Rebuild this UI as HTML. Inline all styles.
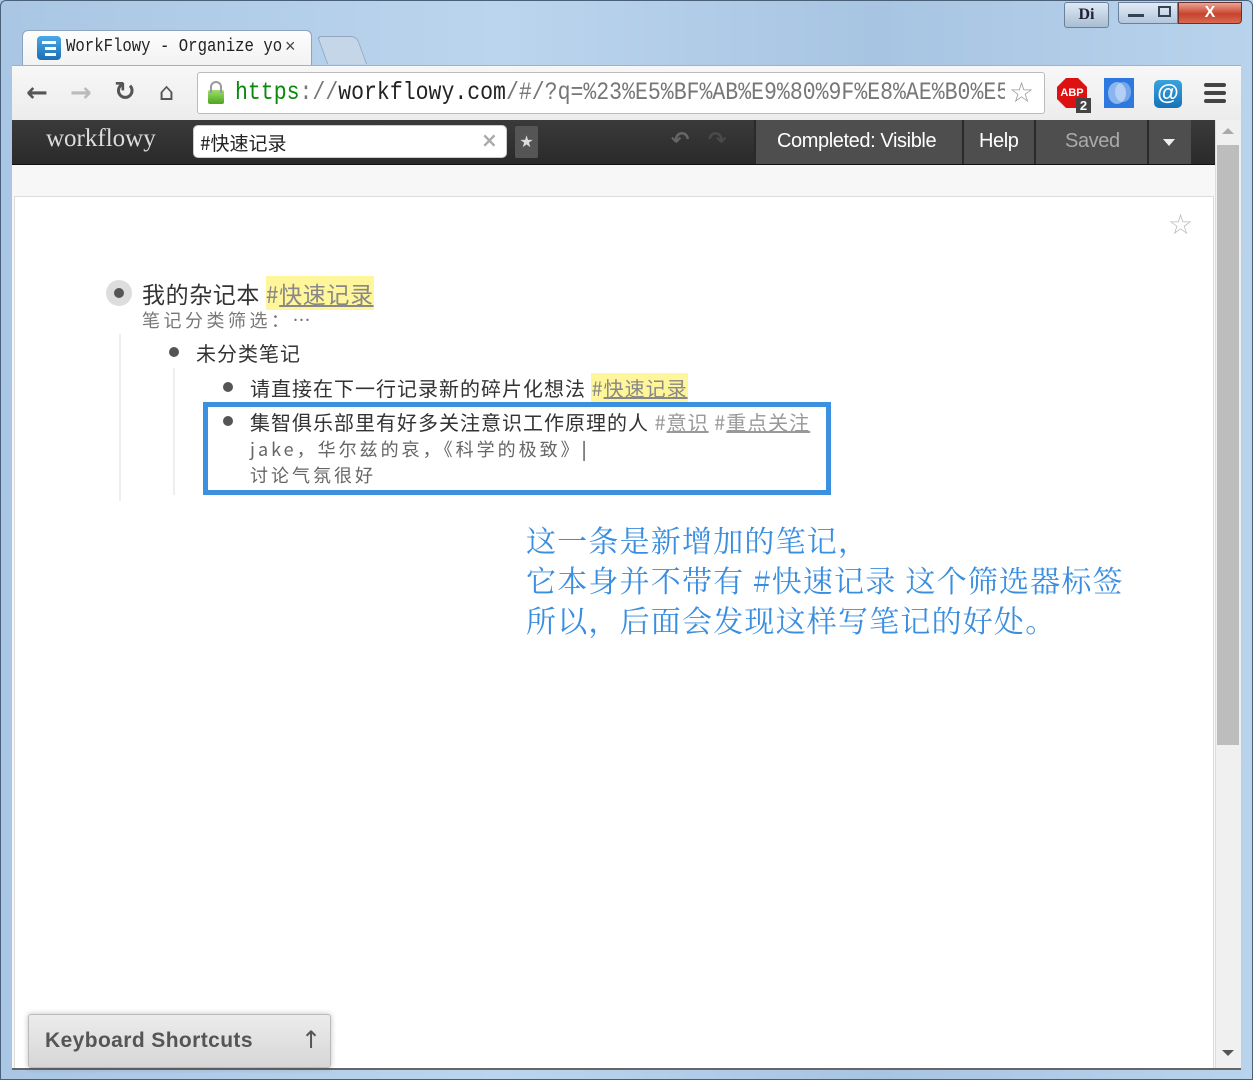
<!DOCTYPE html>
<html><head><meta charset="utf-8"><style>
*{margin:0;padding:0;box-sizing:border-box}
body{width:1253px;height:1080px;overflow:hidden;position:relative;background:linear-gradient(90deg,#a9c6e4,#bcd5ee 40%,#a7c4e2 70%,#b9d3ec);font-family:"Liberation Sans","Noto Sans CJK SC",sans-serif}
.abs{position:absolute}
.mono{font-family:"Liberation Mono","Noto Sans CJK SC",monospace}
.cjk{font-family:"Noto Sans CJK SC","Liberation Sans",sans-serif}
</style></head><body>
<div class="abs" style="left:0;top:0;width:1253px;height:1080px;border:1px solid #4a5f78;border-radius:6px 6px 0 0"></div>
<div class="abs" style="left:1064px;top:2px;width:45px;height:26px;border:1px solid #6b819b;border-radius:3px;background:linear-gradient(#dfe9f4,#a9bdd3);font:bold 16px 'Liberation Serif',serif;color:#223;text-align:center;line-height:24px">Di</div>
<div class="abs" style="left:1118px;top:2px;width:60px;height:22px;border:1px solid #6b819b;border-radius:0 0 0 4px;background:linear-gradient(#e2ebf5,#b3c6dc)"></div>
<div class="abs" style="left:1128px;top:14px;width:16px;height:3px;background:#345"></div>
<div class="abs" style="left:1158px;top:6px;width:13px;height:11px;border:2px solid #345"></div>
<div class="abs" style="left:1178px;top:2px;width:64px;height:22px;border:1px solid #6b3030;border-radius:0 0 4px 0;background:linear-gradient(#e9a594,#c7432e 55%,#d86a50);color:#fff;font:bold 16px 'Liberation Sans';text-align:center;line-height:20px">X</div>
<div class="abs" style="left:322px;top:36px;width:40px;height:28px;background:#c5d6e9;border:1px solid #8fa7c3;border-bottom:none;border-radius:4px 6px 0 0;transform:skewX(20deg)"></div>
<div class="abs" style="left:22px;top:30px;width:290px;height:36px;background:linear-gradient(#fdfdfd,#f2f2f2);border:1px solid #8ea3bd;border-bottom:none;border-radius:6px 6px 0 0"></div>
<div class="abs" style="left:37px;top:36px;width:24px;height:24px;border-radius:4px;background:linear-gradient(#4aa8e8,#1c6eb5)"></div>
<div class="abs" style="left:42px;top:41px;width:14px;height:3px;background:#fff"></div>
<div class="abs" style="left:45px;top:47px;width:11px;height:3px;background:#fff"></div>
<div class="abs" style="left:45px;top:53px;width:11px;height:3px;background:#fff"></div>
<div class="abs mono" style="left:66px;top:37px;font-size:18px;color:#222;white-space:nowrap;transform:scaleX(.87);transform-origin:left">WorkFlowy - Organize yo</div>
<div class="abs" style="left:285px;top:36px;font-size:18px;color:#444">×</div>
<div class="abs" style="left:12px;top:65px;width:1229px;height:56px;background:linear-gradient(#f7f7f7,#ececec);border-top:1px solid #9fb2c8"></div>
<div class="abs" style="left:26px;top:78px;font:bold 26px 'DejaVu Sans';color:#555">←</div>
<div class="abs" style="left:70px;top:78px;font:bold 26px 'DejaVu Sans';color:#bbb">→</div>
<div class="abs" style="left:114px;top:77px;font:bold 26px 'DejaVu Sans';color:#555">↻</div>
<div class="abs" style="left:159px;top:78px;font:24px 'DejaVu Sans';color:#555">⌂</div>
<div class="abs" style="left:197px;top:72px;width:848px;height:42px;background:#fff;border:1px solid #bbb;border-radius:3px"></div>
<div class="abs" style="left:208px;top:90px;width:16px;height:14px;background:linear-gradient(#9de06a,#4ea41f);border-radius:2px"></div>
<div class="abs" style="left:210px;top:81px;width:12px;height:12px;border:2px solid #999;border-bottom:none;border-radius:6px 6px 0 0"></div>
<div class="abs mono" style="left:235px;top:78px;font-size:25px;white-space:nowrap;overflow:hidden;transform:scaleX(.86);transform-origin:left;width:900px"><span style="color:#0a8a0a">https</span><span style="color:#777">://</span><span style="color:#222">workflowy.com</span><span style="color:#777">/#/?q=%23%E5%BF%AB%E9%80%9F%E8%AE%B0%E5%BD%9</span></div>
<div class="abs" style="left:1005px;top:74px;width:38px;height:38px;background:#fff"></div>
<div class="abs" style="left:1009px;top:76px;font:28px 'DejaVu Sans';color:#999">☆</div>
<div class="abs" style="left:1057px;top:78px;width:30px;height:30px;background:#d11;clip-path:polygon(30% 0,70% 0,100% 30%,100% 70%,70% 100%,30% 100%,0 70%,0 30%);color:#fff;font:bold 11px 'Liberation Sans';text-align:center;line-height:30px">ABP</div>
<div class="abs" style="left:1076px;top:98px;width:15px;height:15px;background:#444;color:#fff;font:bold 13px 'Liberation Sans';text-align:center;line-height:15px">2</div>
<div class="abs" style="left:1104px;top:78px;width:30px;height:30px;background:#2d79e0"></div>
<div class="abs" style="left:1108px;top:82px;width:18px;height:22px;border-radius:50%;background:rgba(255,255,255,.45)"></div>
<div class="abs" style="left:1115px;top:82px;width:16px;height:20px;border-radius:50%;background:rgba(255,255,255,.35)"></div>
<div class="abs" style="left:1154px;top:80px;width:28px;height:28px;border-radius:5px;background:linear-gradient(#39a3e0,#1672b8);color:#fff;font:bold 22px 'Liberation Sans';text-align:center;line-height:26px">@</div>
<div class="abs" style="left:1204px;top:83px;width:22px;height:4px;background:#444;border-radius:2px;box-shadow:0 8px 0 #444,0 16px 0 #444"></div>
<div class="abs" style="left:12px;top:120px;width:1203px;height:45px;background:linear-gradient(#3a3a3a,#2a2a2a);border-bottom:1px solid #111"></div>
<div class="abs" style="left:46px;top:125px;font:25px 'Liberation Serif',serif;color:#ddd">workflowy</div>
<div class="abs" style="left:193px;top:125px;width:314px;height:33px;background:#fff;border:1px solid #ccc;border-radius:5px"></div>
<div class="abs cjk" style="left:200px;top:129px;font-size:19px;color:#222">#快速记录</div>
<div class="abs" style="left:481px;top:128px;font:bold 20px 'DejaVu Sans';color:#aaa">×</div>
<div class="abs" style="left:515px;top:126px;width:23px;height:32px;background:#555;border-radius:2px;color:#ddd;font:16px 'DejaVu Sans';text-align:center;line-height:32px">★</div>
<div class="abs" style="left:671px;top:128px;font:bold 22px 'DejaVu Sans';color:#666">↶</div>
<div class="abs" style="left:708px;top:128px;font:bold 22px 'DejaVu Sans';color:#4a4a4a">↷</div>
<div class="abs" style="left:755px;top:120px;width:436px;height:44px;background:#4e4e4e"></div>
<div class="abs" style="left:962px;top:120px;width:2px;height:44px;background:#2a2a2a"></div>
<div class="abs" style="left:1034px;top:120px;width:2px;height:44px;background:#2a2a2a"></div>
<div class="abs" style="left:1147px;top:120px;width:2px;height:44px;background:#2a2a2a"></div>
<div class="abs" style="left:754px;top:120px;width:2px;height:44px;background:#2a2a2a"></div>
<div class="abs" style="left:777px;top:130px;font-size:20px;color:#fff;letter-spacing:-.4px">Completed: Visible</div>
<div class="abs" style="left:979px;top:130px;font-size:20px;color:#fff;letter-spacing:-.4px">Help</div>
<div class="abs" style="left:1065px;top:130px;font-size:20px;color:#aaa;letter-spacing:-.4px">Saved</div>
<div class="abs" style="left:1163px;top:139px;width:0;height:0;border:6px solid transparent;border-top:7px solid #eee;border-bottom:none"></div>
<div class="abs" style="left:12px;top:165px;width:1204px;height:904px;background:#f7f7f7"></div>
<div class="abs" style="left:14px;top:196px;width:1200px;height:873px;background:#fff;border:1px solid #ddd;border-bottom:none"></div>
<div class="abs" style="left:1168px;top:208px;font:28px 'DejaVu Sans';color:#bbb">☆</div>
<div class="abs" style="left:1215px;top:120px;width:26px;height:949px;background:#f0f0f0;border-left:1px solid #ddd"></div>
<div class="abs" style="left:1217px;top:145px;width:22px;height:600px;background:#bdbdbd"></div>
<div class="abs" style="left:1222px;top:128px;border:6px solid transparent;border-bottom:6px solid #aaa;border-top:none"></div>
<div class="abs" style="left:1222px;top:1050px;border:6px solid transparent;border-top:6px solid #555;border-bottom:none"></div>
<div class="abs" style="left:12px;top:1068px;width:1229px;height:2px;background:#666"></div>
<div class="abs" style="left:106px;top:280px;width:26px;height:26px;border-radius:50%;background:#ddd"></div>
<div class="abs" style="left:114px;top:288px;width:10px;height:10px;border-radius:50%;background:#555"></div>
<div class="abs cjk" style="left:142px;top:276px;font-size:23px;letter-spacing:.6px;color:#333;white-space:nowrap">我的杂记本 <span style="background:#fff59a;color:#888"><span>#</span><u>快速记录</u></span></div>
<div class="abs cjk" style="left:142px;top:307px;font-size:18px;color:#777;letter-spacing:3.5px;white-space:nowrap">笔记分类筛选：…</div>
<div class="abs" style="left:119px;top:334px;width:2px;height:167px;background:#eee"></div>
<div class="abs" style="left:169px;top:347px;width:10px;height:10px;border-radius:50%;background:#555"></div>
<div class="abs cjk" style="left:196px;top:338px;font-size:20px;letter-spacing:1px;color:#333">未分类笔记</div>
<div class="abs" style="left:173px;top:368px;width:2px;height:127px;background:#eee"></div>
<div class="abs" style="left:223px;top:382px;width:10px;height:10px;border-radius:50%;background:#555"></div>
<div class="abs cjk" style="left:250px;top:373px;font-size:20px;letter-spacing:1px;color:#333;white-space:nowrap">请直接在下一行记录新的碎片化想法 <span style="background:#fff59a;color:#888">#<u>快速记录</u></span></div>
<div class="abs" style="left:203px;top:402px;width:628px;height:93px;border:5px solid #3b91e0"></div>
<div class="abs" style="left:223px;top:416px;width:10px;height:10px;border-radius:50%;background:#555"></div>
<div class="abs cjk" style="left:250px;top:407px;font-size:20px;letter-spacing:1px;color:#333;white-space:nowrap">集智俱乐部里有好多关注意识工作原理的人 <span style="color:#999">#<u>意识</u> #<u>重点关注</u></span></div>
<div class="abs cjk" style="left:250px;top:436px;font-size:18px;color:#666;white-space:nowrap;letter-spacing:3px">jake，华尔兹的哀，《科学的极致》<span style="color:#333">|</span></div>
<div class="abs cjk" style="left:250px;top:462px;font-size:18px;color:#666;letter-spacing:3px">讨论气氛很好</div>
<div class="abs" style="left:526px;top:519px;font-family:'Noto Serif CJK SC','Noto Sans CJK SC',serif;font-size:30px;letter-spacing:1.2px;line-height:40px;color:#3a8ee0;white-space:nowrap">这一条是新增加的笔记，<br>它本身并不带有 #快速记录 这个筛选器标签<br>所以，后面会发现这样写笔记的好处。</div>
<div class="abs" style="left:28px;top:1014px;width:303px;height:54px;background:linear-gradient(#ececec,#d6d6d6);border:1px solid #bbb;border-radius:3px;box-shadow:0 0 6px rgba(0,0,0,.25)"></div>
<div class="abs" style="left:45px;top:1029px;font:bold 21px 'Liberation Sans';letter-spacing:.4px;color:#555">Keyboard Shortcuts</div>
<div class="abs" style="left:301px;top:1026px;font:24px 'DejaVu Sans';color:#555">↑</div>
</body></html>
